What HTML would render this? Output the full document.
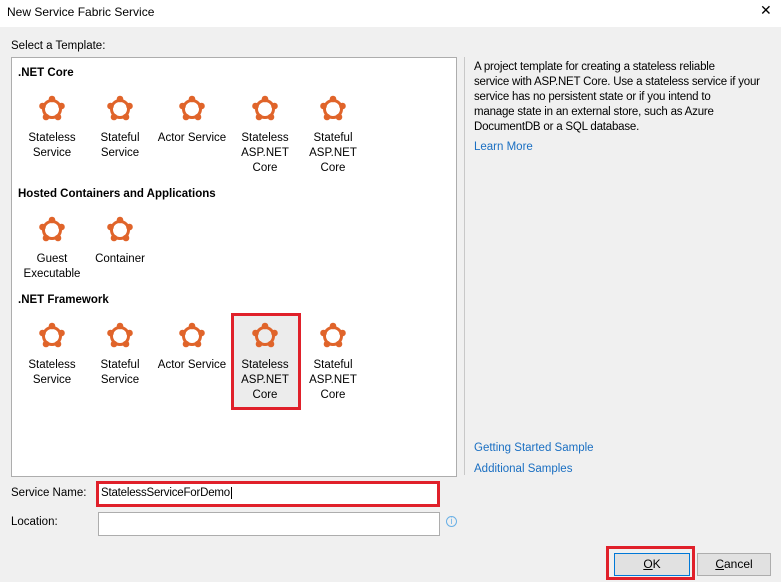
<!DOCTYPE html><html><head><style>
body{margin:0;width:781px;height:582px;background:#f0f0f0;font-family:"Liberation Sans",sans-serif;font-size:12px;color:#000;position:relative;overflow:hidden}
.a{position:absolute;white-space:nowrap}
.t{position:absolute;text-align:center;width:72px;line-height:15px;font-size:11.5px}
.h{position:absolute;left:18px;font-weight:bold;font-size:11.5px}
a{color:#1a6fc2;text-decoration:none}
</style></head><body>
<div class="a" style="left:0;top:0;width:781px;height:27px;background:#fff"></div>
<div class="a" style="left:7px;top:5px">New Service Fabric Service</div>
<div class="a" style="left:760px;top:2px;font-size:14px">✕</div>
<div class="a" style="left:11px;top:40px;font-size:11.5px">Select a Template:</div>
<div class="a" style="left:11px;top:57px;width:444px;height:418px;background:#fff;border:1px solid #adadad"></div>
<div class="a" style="left:464px;top:57px;width:1px;height:418px;background:#c8c8c8"></div>
<div class="h" style="top:67px">.NET Core</div>
<div class="h" style="top:188px">Hosted Containers and Applications</div>
<div class="h" style="top:294px">.NET Framework</div>
<div class="a" style="left:231px;top:313px;width:64px;height:91px;background:#ececec;border:3px solid #e0202a"></div>
<svg class="a" style="left:0;top:0" width="781" height="582">
<defs><g id="i" fill="#e0642a"><circle r="8.5" fill="none" stroke="#e0642a" stroke-width="3"/><circle cx="0" cy="-10" r="3.3"/><circle cx="9.5" cy="-3" r="3.3"/><circle cx="6" cy="8" r="3.3"/><circle cx="-6" cy="8" r="3.3"/><circle cx="-9.5" cy="-3" r="3.3"/></g></defs>
<use href="#i" x="52" y="109"/><use href="#i" x="120" y="109"/><use href="#i" x="192" y="109"/><use href="#i" x="265" y="109"/><use href="#i" x="333" y="109"/>
<use href="#i" x="52" y="230"/><use href="#i" x="120" y="230"/>
<use href="#i" x="52" y="336"/><use href="#i" x="120" y="336"/><use href="#i" x="192" y="336"/><use href="#i" x="265" y="336"/><use href="#i" x="333" y="336"/>
</svg>
<div class="t" style="left:16px;top:131px">Stateless<br>Service</div>
<div class="t" style="left:84px;top:131px">Stateful<br>Service</div>
<div class="t" style="left:154px;top:131px;width:76px">Actor Service</div>
<div class="t" style="left:229px;top:131px">Stateless<br>ASP.NET<br>Core</div>
<div class="t" style="left:297px;top:131px">Stateful<br>ASP.NET<br>Core</div>
<div class="t" style="left:16px;top:252px">Guest<br>Executable</div>
<div class="t" style="left:84px;top:252px">Container</div>
<div class="t" style="left:16px;top:358px">Stateless<br>Service</div>
<div class="t" style="left:84px;top:358px">Stateful<br>Service</div>
<div class="t" style="left:154px;top:358px;width:76px">Actor Service</div>
<div class="t" style="left:229px;top:358px">Stateless<br>ASP.NET<br>Core</div>
<div class="t" style="left:297px;top:358px">Stateful<br>ASP.NET<br>Core</div>
<div class="a" style="left:474px;top:60px;line-height:15px;font-size:11.5px;letter-spacing:-0.2px">A project template for creating a stateless reliable<br>service with ASP.NET Core. Use a stateless service if your<br>service has no persistent state or if you intend to<br>manage state in an external store, such as Azure<br>DocumentDB or a SQL database.</div>
<a class="a" style="left:474px;top:141px;font-size:11.5px">Learn More</a>
<a class="a" style="left:474px;top:442px;font-size:11.5px">Getting Started Sample</a>
<a class="a" style="left:474px;top:463px;font-size:11.5px">Additional Samples</a>
<div class="a" style="left:11px;top:487px;font-size:11.5px">Service Name:</div>
<div class="a" style="left:96px;top:481px;width:338px;height:20px;background:#fff;border:3px solid #e0202a"></div>
<div class="a" style="left:101px;top:487px;font-size:11.5px;letter-spacing:-0.2px">StatelessServiceForDemo<span style="border-left:1px solid #000;margin-left:1px"></span></div>
<div class="a" style="left:11px;top:516px;font-size:11.5px">Location:</div>
<div class="a" style="left:98px;top:512px;width:340px;height:22px;background:#fff;border:1px solid #adadad"></div>
<div class="a" style="left:446px;top:516px;width:9px;height:9px;border:1px solid #6ab0e6;border-radius:50%;color:#6ab0e6;font-size:9px;line-height:9px;text-align:center">i</div>
<div class="a" style="left:606px;top:546px;width:83px;height:28px;border:3px solid #e0202a"></div>
<div class="a" style="left:614px;top:553px;width:74px;height:21px;background:#e1e1e1;border:1px solid #0078d7;text-align:center;line-height:21px"><u>O</u>K</div>
<div class="a" style="left:697px;top:553px;width:72px;height:21px;background:#e1e1e1;border:1px solid #adadad;text-align:center;line-height:21px"><u>C</u>ancel</div>
</body></html>
